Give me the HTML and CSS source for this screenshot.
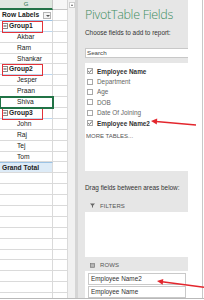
FILE: index.html
```html
<!DOCTYPE html>
<html>
<head>
<meta charset="utf-8">
<link rel="stylesheet" href="styles.css">
</head>
<body>
<div class="frame">
  <div class="sheet">
    <div class="colhead"><div class="ch ch-g">G</div><div class="ch ch-h"></div></div>
    <div class="row"><div class="c g hdr"><span class="b">Row Labels</span><span class="dd"></span></div><div class="c h"></div></div>
    <div class="row"><div class="c g grp"><svg class="tog" viewBox="0 0 6 6"><rect x="0.5" y="0.5" width="5" height="5" fill="#fff" stroke="#8a8a8a"/><path d="M1.5 3H4.5" stroke="#444"/></svg><span class="b">Group1</span><span class="redbox"></span></div><div class="c h"></div></div>
    <div class="row"><div class="c g item">Akbar</div><div class="c h"></div></div>
    <div class="row"><div class="c g item">Ram</div><div class="c h"></div></div>
    <div class="row"><div class="c g item">Shankar</div><div class="c h"></div></div>
    <div class="row"><div class="c g grp"><svg class="tog" viewBox="0 0 6 6"><rect x="0.5" y="0.5" width="5" height="5" fill="#fff" stroke="#8a8a8a"/><path d="M1.5 3H4.5" stroke="#444"/></svg><span class="b">Group2</span><span class="redbox"></span></div><div class="c h"></div></div>
    <div class="row"><div class="c g item">Jesper</div><div class="c h"></div></div>
    <div class="row"><div class="c g item">Praan</div><div class="c h"></div></div>
    <div class="row"><div class="c g item sel">Shiva</div><div class="c h"></div></div>
    <div class="row"><div class="c g grp"><svg class="tog" viewBox="0 0 6 6"><rect x="0.5" y="0.5" width="5" height="5" fill="#fff" stroke="#8a8a8a"/><path d="M1.5 3H4.5" stroke="#444"/></svg><span class="b">Group3</span><span class="redbox"></span></div><div class="c h"></div></div>
    <div class="row"><div class="c g item">John</div><div class="c h"></div></div>
    <div class="row"><div class="c g item">Raj</div><div class="c h"></div></div>
    <div class="row"><div class="c g item">Tej</div><div class="c h"></div></div>
    <div class="row"><div class="c g item">Tom</div><div class="c h"></div></div>
    <div class="row"><div class="c g total"><span class="b">Grand Total</span></div><div class="c h"></div></div>
    <div class="row"><div class="c g"></div><div class="c h"></div></div>
    <div class="row"><div class="c g"></div><div class="c h"></div></div>
    <div class="row"><div class="c g"></div><div class="c h"></div></div>
    <div class="row"><div class="c g"></div><div class="c h"></div></div>
    <div class="row"><div class="c g"></div><div class="c h"></div></div>
    <div class="row"><div class="c g"></div><div class="c h"></div></div>
    <div class="row"><div class="c g"></div><div class="c h"></div></div>
    <div class="row"><div class="c g"></div><div class="c h"></div></div>
    <div class="row"><div class="c g"></div><div class="c h"></div></div>
    <div class="row"><div class="c g"></div><div class="c h"></div></div>
    <div class="row"><div class="c g"></div><div class="c h"></div></div>
    <div class="row"><div class="c g"></div><div class="c h"></div></div>
  </div>
  <div class="vscroll"><div class="uparrow"><span class="tri-up"></span></div></div>
  <div class="panel">
    <div class="title">PivotTable Fields</div>
    <div class="choose">Choose fields to add to report:</div>
    <div class="search">Search</div>
    <div class="list">
      <div class="field on"><span class="cb"><svg viewBox="0 0 6 6"><path d="M1.2 3.1L2.5 4.4L4.9 1.5" fill="none" stroke="#555" stroke-width="0.9"/></svg></span>Employee Name</div>
      <div class="field"><span class="cb"></span>Department</div>
      <div class="field"><span class="cb"></span>Age</div>
      <div class="field"><span class="cb"></span>DOB</div>
      <div class="field"><span class="cb"></span>Date Of Joining</div>
      <div class="field on"><span class="cb"><svg viewBox="0 0 6 6"><path d="M1.2 3.1L2.5 4.4L4.9 1.5" fill="none" stroke="#555" stroke-width="0.9"/></svg></span>Employee Name2</div>
      <div class="more">MORE TABLES...</div>
    </div>
    <div class="drag">Drag fields between areas below:</div>
    <div class="area-label"><svg class="aicon" viewBox="0 0 5 5"><path d="M0 0.6H5L3 2.7V4.6H2V2.7Z" fill="#666"/></svg>FILTERS</div>
    <div class="area filters"></div>
    <div class="area-label"><svg class="aicon" viewBox="0 0 5 5"><rect x="0.5" y="0.5" width="4" height="4" fill="none" stroke="#777" stroke-width="0.7"/><path d="M0.5 1.8H4.5M0.5 3.2H4.5" stroke="#777" stroke-width="0.7"/></svg>ROWS</div>
    <div class="area rows">
      <div class="pill">Employee Name2</div>
      <div class="pill">Employee Name</div>
    </div>
  </div>
  <div class="side"></div>
  <svg class="arrows" viewBox="0 0 204 300" width="204" height="300">
    <line x1="196" y1="125" x2="156" y2="121.5" stroke="#e3262d" stroke-width="1.6"/>
    <polygon points="151,121 157.2,118.6 156.8,124.4" fill="#e3262d"/>
    <line x1="204" y1="287.2" x2="162" y2="281.7" stroke="#e3262d" stroke-width="1.6"/>
    <polygon points="157,281 163.3,278.9 162.7,284.7" fill="#e3262d"/>
  </svg>
</div>
</body>
</html>
```
FILE: styles.css
```css
html, body {
  margin: 0;
  padding: 0;
  background: #ffffff;
}
.frame {
  position: relative;
  width: 204px;
  height: 299px;
  display: flex;
  overflow: hidden;
  border-bottom: 1px solid #b9b9b9;
  box-sizing: border-box;
  font-family: "Liberation Sans", Arial, sans-serif;
}
.sheet {
  width: 68px;
  flex: none;
  display: flex;
  flex-direction: column;
}
.colhead {
  display: flex;
  height: 10px;
  flex: none;
}
.ch {
  box-sizing: border-box;
  height: 10px;
  font-size: 6px;
  line-height: 8px;
  text-align: center;
}
.ch-g {
  width: 53px;
  background: #dfe8e0;
  color: #217346;
  border-bottom: 2px solid #217346;
  border-right: 1px solid #c6c6c6;
}
.ch-h {
  width: 15px;
  background: #f6f6f6;
  border-bottom: 1px solid #c6c6c6;
  border-right: 1px solid #d4d4d4;
}
.row {
  display: flex;
  height: 10.9px;
  flex: none;
}
.c {
  box-sizing: border-box;
  height: 100%;
  border-bottom: 1px solid #dadada;
  border-right: 1px solid #dadada;
  font-size: 6.7px;
  line-height: 10px;
  color: #222;
  white-space: nowrap;
  position: relative;
}
.g {
  width: 53px;
  padding-left: 2px;
  display: flex;
  align-items: center;
}
.h {
  width: 15px;
}
.b {
  font-weight: bold;
}
.hdr {
  border-bottom-color: #9cc3e5;
}
.dd {
  position: absolute;
  left: 43px;
  top: 1.5px;
  width: 8px;
  height: 7px;
  box-sizing: border-box;
  border: 1px solid #b5b5b5;
  background: #f4f4f4;
}
.dd::after {
  content: "";
  position: absolute;
  left: 1.5px;
  top: 2px;
  border-left: 2px solid transparent;
  border-right: 2px solid transparent;
  border-top: 2px solid #555;
}
.grp {
  border-bottom-color: #bdd7ee;
  padding-left: 2px;
}
.tog {
  width: 6px;
  height: 6px;
  margin-right: 1px;
  flex: none;
}
.redbox {
  position: absolute;
  left: 2px;
  top: 0;
  width: 41px;
  bottom: -2px;
  border: 1.5px solid #e3323a;
  box-sizing: border-box;
}
.item {
  padding-left: 17px;
}
.sel {
  outline: 2px solid #217346;
  outline-offset: -1px;
  z-index: 2;
}
.total {
  background: #ddebf7;
  border-top: 1px solid #9cc3e5;
  border-bottom-color: #dadada;
}
.vscroll {
  width: 7px;
  flex: none;
  background: #f1f1f1;
}
.uparrow {
  margin: 2px 0 0 1px;
  width: 6px;
  height: 6px;
  box-sizing: border-box;
  border: 1px solid #cfcfcf;
  background: #fff;
  display: flex;
  align-items: center;
  justify-content: center;
}
.tri-up {
  width: 0;
  height: 0;
  border-left: 1.5px solid transparent;
  border-right: 1.5px solid transparent;
  border-bottom: 2px solid #666;
}
.panel {
  width: 113px;
  flex: none;
  box-sizing: border-box;
  background: #e6e6e6;
  border-left: 3px solid #d5d5d5;
  padding-left: 7px;
  display: flex;
  flex-direction: column;
  color: #444;
}
.title {
  margin-top: 8px;
  font-family: "Open Sans", sans-serif;
  font-weight: 300;
  font-size: 12.5px;
  line-height: 14px;
  letter-spacing: -0.3px;
  color: #3f8e5f;
  white-space: nowrap;
}
.choose {
  margin-top: 7px;
  font-size: 6.4px;
  line-height: 8px;
  color: #333;
  white-space: nowrap;
}
.search {
  margin-top: 11px;
  height: 10px;
  box-sizing: border-box;
  background: #fff;
  border: 1px solid #c8c8c8;
  border-right: none;
  font-size: 6.2px;
  line-height: 8px;
  padding-left: 1px;
  color: #444;
}
.list {
  margin-top: 5px;
  height: 110px;
  background: #fff;
  padding-top: 3px;
  box-sizing: border-box;
}
.field {
  display: flex;
  align-items: center;
  height: 10.4px;
  font-size: 6.4px;
  color: #666;
  white-space: nowrap;
}
.field.on {
  font-weight: bold;
  color: #333;
}
.cb {
  width: 6px;
  height: 6px;
  box-sizing: border-box;
  border: 1px solid #a8a8a8;
  background: #fff;
  margin-left: 2px;
  margin-right: 4px;
  flex: none;
  display: flex;
}
.cb svg {
  width: 6px;
  height: 6px;
  margin: -1px;
}
.more {
  margin-top: 3px;
  font-size: 6px;
  line-height: 10px;
  color: #555;
  padding-left: 1px;
}
.drag {
  margin-top: 13px;
  font-size: 6.4px;
  line-height: 8px;
  color: #333;
  white-space: nowrap;
}
.area-label {
  margin-top: 10px;
  display: flex;
  align-items: center;
  font-size: 6px;
  line-height: 8px;
  color: #555;
  letter-spacing: 0.1px;
}
.aicon {
  width: 5px;
  height: 5px;
  margin-left: 5px;
  margin-right: 5px;
  flex: none;
}
.area {
  margin-top: 2px;
  background: #fff;
}
.filters {
  height: 46px;
}
.area-label + .area.rows {
  margin-top: 2px;
}
.rows {
  flex: 1;
  padding: 2px 2px 0 3px;
  display: flex;
  flex-direction: column;
  gap: 1px;
}
.filters + .area-label {
  margin-top: 4px;
}
.pill {
  height: 12px;
  box-sizing: border-box;
  border: 1px solid #c9c9c9;
  background: #fff;
  font-size: 6.4px;
  line-height: 10px;
  padding-left: 2px;
  color: #333;
  white-space: nowrap;
}
.side {
  width: 14px;
  flex: none;
  background: #fff;
  border-right: 1px solid #c8c8c8;
}
.arrows {
  position: absolute;
  left: 0;
  top: 0;
  pointer-events: none;
}
```
